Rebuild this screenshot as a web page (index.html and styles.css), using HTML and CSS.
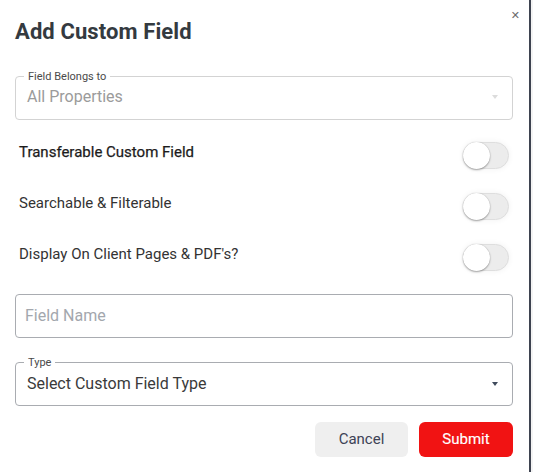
FILE: index.html
```html
<!DOCTYPE html>
<html>
<head>
<meta charset="utf-8">
<link rel="stylesheet" href="styles.css">
</head>
<body>
<div class="dialog">
  <button class="close" aria-label="Close">&#x2715;</button>
  <h1 class="title">Add Custom Field</h1>

  <div class="outlined light">
    <span class="legend">Field Belongs to</span>
    <span class="value muted">All Properties</span>
    <span class="caret light-caret"></span>
  </div>

  <div class="toggles">
    <div class="row">
      <span class="row-label strong">Transferable Custom Field</span>
      <span class="switch"><span class="thumb"></span></span>
    </div>
    <div class="row">
      <span class="row-label">Searchable &amp; Filterable</span>
      <span class="switch"><span class="thumb"></span></span>
    </div>
    <div class="row">
      <span class="row-label">Display On Client Pages &amp; PDF's?</span>
      <span class="switch"><span class="thumb"></span></span>
    </div>
  </div>

  <div class="outlined dark name">
    <span class="value placeholder">Field Name</span>
  </div>

  <div class="outlined dark type">
    <span class="legend">Type</span>
    <span class="value select">Select Custom Field Type</span>
    <span class="caret"></span>
  </div>

  <div class="actions">
    <button class="btn cancel">Cancel</button>
    <button class="btn submit">Submit</button>
  </div>
</div>
</body>
</html>
```

FILE: styles.css
```css
html, body {
  margin: 0;
  padding: 0;
}
body {
  width: 533px;
  height: 472px;
  overflow: hidden;
  background: linear-gradient(to right, #ffffff 529px, #3e4350 529px, #3e4350 531px, #f4f4f4 531px);
  font-family: Roboto, "Noto Sans", sans-serif;
}
.dialog {
  position: relative;
  width: 529px;
  height: 469px;
  box-sizing: border-box;
  background: #fff;
  border-radius: 0 5px 5px 0;
  padding: 18px 16px 0 15px;
}
.close {
  position: absolute;
  top: 9px;
  right: 9px;
  border: none;
  background: none;
  padding: 0;
  font-size: 11px;
  color: #6b6b6b;
  font-family: "DejaVu Sans", sans-serif;
  cursor: pointer;
}
.title {
  margin: 0;
  font-size: 22px;
  line-height: 28px;
  font-weight: 700;
  color: #343a40;
  letter-spacing: 0.1px;
}
.outlined {
  position: relative;
  height: 44px;
  box-sizing: border-box;
  border-radius: 4px;
  display: flex;
  align-items: center;
  padding: 0 12px 0 11px;
}
.outlined.light {
  margin-top: 30px;
  border: 1px solid #d3d3d3;
}
.outlined.dark {
  border: 1px solid #a9acb1;
}
.legend {
  position: absolute;
  top: -7px;
  left: 8px;
  padding: 0 4px;
  background: #fff;
  font-size: 11px;
  line-height: 13px;
  color: #4a4a4a;
}
.value {
  flex: 1;
  font-size: 16px;
  color: #3a3a3a;
}
.value.select {
  margin-top: -2px;
}
.value.muted {
  color: #9b9b9b;
  margin-top: -3px;
}
.value.placeholder {
  color: #a3a7ad;
  margin-left: -2px;
  margin-top: -2px;
}
.caret {
  width: 0;
  height: 0;
  border-left: 3.5px solid transparent;
  border-right: 3.5px solid transparent;
  border-top: 4px solid #3f4a5c;
  margin-right: 2px;
  margin-top: 0;
}
.caret.light-caret {
  border-top-color: #dcdcdc;
  margin-top: -2px;
}
.toggles {
  display: flex;
  flex-direction: column;
  margin-top: 10px;
}
.row {
  height: 51px;
  display: flex;
  align-items: center;
  justify-content: space-between;
  padding: 0 4px;
}
.row-label {
  font-size: 15px;
  color: #333;
  margin-bottom: 7px;
}
.row-label.strong {
  color: #1c1c1c;
  -webkit-text-stroke: 0.25px #1c1c1c;
}
.switch {
  position: relative;
  width: 46px;
  height: 27px;
  box-sizing: border-box;
  border-radius: 14px;
  background: #ececec;
  border: 1px solid #dedede;
  box-shadow: 0 0 6px rgba(0, 0, 0, 0.06);
}
.thumb {
  position: absolute;
  top: -1px;
  left: -1px;
  width: 27px;
  height: 27px;
  border-radius: 50%;
  background: #fff;
  box-shadow: 0 1px 2px rgba(0, 0, 0, 0.35), 0 0 1px rgba(0, 0, 0, 0.2);
}
.name {
  margin-top: 11px;
}
.type {
  margin-top: 24px;
}
.actions {
  display: flex;
  justify-content: flex-end;
  gap: 11px;
  margin-top: 16px;
}
.btn {
  height: 35px;
  border: none;
  border-radius: 6px;
  font-family: Roboto, "Noto Sans", sans-serif;
  font-size: 15px;
  cursor: pointer;
}
.cancel {
  width: 93px;
  background: #efefef;
  color: #3d4255;
  padding-bottom: 2px;
}
.submit {
  width: 94px;
  background: #f11313;
  color: #fff;
  -webkit-text-stroke: 0.15px #fff;
  padding-bottom: 2px;
}
```
